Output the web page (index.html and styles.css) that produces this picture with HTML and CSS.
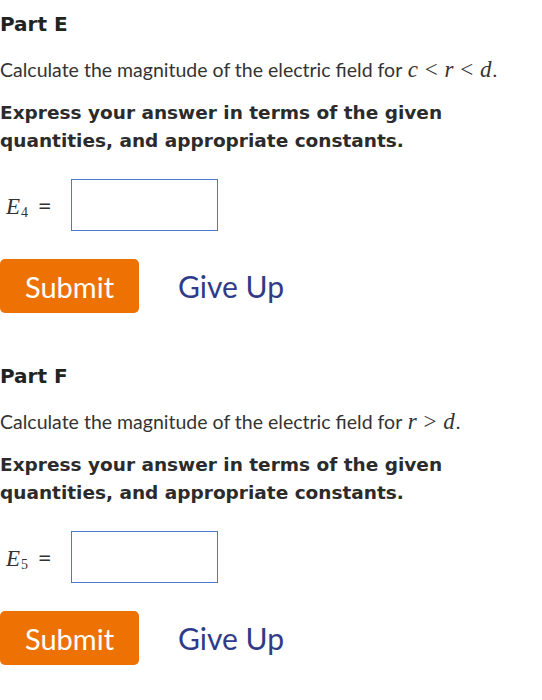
FILE: index.html
```
<!doctype html>
<html lang="en-US">
    <head>
        <meta charset="utf-8">
        <meta name="viewport" content="width=device-width, initial-scale=1.0">
        <title>Electric Field | Parts E and F</title>
        <link rel="stylesheet" href="styles.css">
    </head>
    <body>
        <main>
            <section class="part">
                <h2>Part E</h2>
                <p class="prompt">Calculate the magnitude of the electric field for <span class="math"><i>c</i> &lt; <i>r</i> &lt; <i>d</i></span>.</p>
                <p class="instructions">Express your answer in terms of the given quantities, and appropriate constants.</p>
                <div class="answer">
                    <label for="e4" class="math"><i>E</i><sub>4</sub> <span class="eq">=</span></label>
                    <input type="text" id="e4">
                </div>
                <div class="actions">
                    <button type="button" class="submit">Submit</button>
                    <a href="#" class="give-up">Give Up</a>
                </div>
            </section>
            <section class="part">
                <h2>Part F</h2>
                <p class="prompt">Calculate the magnitude of the electric field for <span class="math"><i>r</i> &gt; <i>d</i></span>.</p>
                <p class="instructions">Express your answer in terms of the given quantities, and appropriate constants.</p>
                <div class="answer">
                    <label for="e5" class="math"><i>E</i><sub>5</sub> <span class="eq">=</span></label>
                    <input type="text" id="e5">
                </div>
                <div class="actions">
                    <button type="button" class="submit">Submit</button>
                    <a href="#" class="give-up">Give Up</a>
                </div>
            </section>
        </main>
    </body>
</html>
```

FILE: styles.css
```
* {
    padding: 0;
    margin: 0;
    box-sizing: border-box;
    font-family: Lato, "Open Sans", sans-serif;
}

body {
    background: #fff;
    color: #333;
}

.part {
    padding: 11px 0 39px;
}

h2 {
    font-family: "DejaVu Sans", Lato, sans-serif;
    font-size: 20px;
    line-height: 26px;
    font-weight: 700;
    color: #222;
}

.prompt {
    margin-top: 19px;
    font-size: 19.5px;
    line-height: 28px;
}

.instructions {
    margin-top: 15px;
    font-family: "DejaVu Sans", Lato, sans-serif;
    font-size: 18.5px;
    line-height: 28px;
    font-weight: 700;
    color: #2b2b2b;
    max-width: 480px;
}

.math,
.math i {
    font-family: "Liberation Serif", "Times New Roman", serif;
    font-size: 23px;
    color: #333;
}

.math i {
    padding: 0 1px;
}

.math sub {
    font-size: 14px;
    font-style: normal;
    vertical-align: -3px;
    font-family: "Liberation Serif", serif;
}

.answer {
    margin-top: 24px;
    display: flex;
    align-items: center;
    gap: 18px;
}

.answer label {
    padding-left: 5px;
    width: 53px;
    white-space: nowrap;
}

.answer .eq {
    font-family: Lato, sans-serif;
    font-size: 24px;
    margin-left: 4px;
}

.answer input {
    width: 147px;
    height: 52px;
    border: 1px solid #4a78cf;
    font-size: 20px;
    padding: 0 8px;
}

.actions {
    margin-top: 28px;
    display: flex;
    align-items: center;
    gap: 39px;
}

.submit {
    width: 139px;
    height: 54px;
    border: none;
    border-radius: 5px;
    background: #ee7203;
    color: #fff;
    font-size: 29px;
    cursor: pointer;
}

.give-up {
    font-size: 30px;
    color: #2e3b88;
    text-decoration: none;
}
```
